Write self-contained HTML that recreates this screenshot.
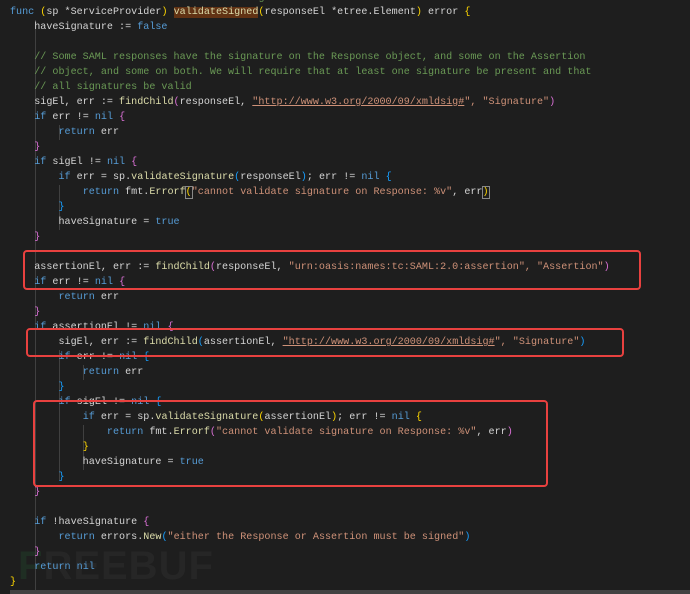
<!DOCTYPE html>
<html><head><meta charset="utf-8"><style>
body{margin:0;width:690px;height:594px;background:#1e1e1e;overflow:hidden;position:relative;font-family:"Liberation Mono",monospace;font-size:10.1px;color:#d4d4d4}
.l{position:absolute;left:10px;white-space:pre;height:15px;line-height:15px;top:0}
.k{color:#569cd6}.f{color:#dcdcaa}.s{color:#ce9178}.c{color:#6a9955}.v{color:#d4d4d4}
.y{color:#ffd700}.p{color:#da70d6}.b{color:#179fff}.u{text-decoration:underline}
.hl{background:#613214}
.box{position:absolute;border:2.5px solid #e8413f;border-radius:4px}
.g{position:absolute;width:1px;background:#404040}
.wm{position:absolute;left:18px;top:544px;font-family:"Liberation Sans",sans-serif;font-weight:bold;font-size:40px;line-height:44px;color:#262626;letter-spacing:1px}
</style></head><body>
<div class="wm"><span style="color:#1f2e23">F</span>REEBUF</div>
<div class="g" style="left:35px;top:20px;height:570px"></div>
<div class="g" style="left:59px;top:125px;height:15px"></div>
<div class="g" style="left:59px;top:185px;height:45px"></div>
<div class="g" style="left:59px;top:350px;height:130px"></div>
<div class="g" style="left:83px;top:365px;height:15px"></div>
<div class="g" style="left:83px;top:425px;height:45px"></div>
<div class="l c" style="top:-9px">// are valid and there is at least one signature.</div>
<div class="l" style="top:5px"><span class="k">func</span> <span class="y">(</span>sp *ServiceProvider<span class="y">)</span> <span class="f hl">validateSigned</span><span class="y">(</span>responseEl *etree.Element<span class="y">)</span> error <span class="y">{</span></div>
<div class="l" style="top:20px">    haveSignature := <span class="k">false</span></div>
<div class="l c" style="top:50px">    // Some SAML responses have the signature on the Response object, and some on the Assertion</div>
<div class="l c" style="top:65px">    // object, and some on both. We will require that at least one signature be present and that</div>
<div class="l c" style="top:80px">    // all signatures be valid</div>
<div class="l" style="top:95px">    sigEl, err := <span class="f">findChild</span><span class="p">(</span>responseEl, <span class="s"><span class="u">"http://www.w3.org/2000/09/xmldsig#</span>", "Signature"</span><span class="p">)</span></div>
<div class="l" style="top:110px">    <span class="k">if</span> err != <span class="k">nil</span> <span class="p">{</span></div>
<div class="l" style="top:125px">        <span class="k">return</span> err</div>
<div class="l" style="top:140px">    <span class="p">}</span></div>
<div class="l" style="top:155px">    <span class="k">if</span> sigEl != <span class="k">nil</span> <span class="p">{</span></div>
<div class="l" style="top:170px">        <span class="k">if</span> err = sp.<span class="f">validateSignature</span><span class="b">(</span>responseEl<span class="b">)</span>; err != <span class="k">nil</span> <span class="b">{</span></div>
<div class="l" style="top:185px">            <span class="k">return</span> fmt.<span class="f">Errorf</span><span class="y" style="outline:1px solid #888">(</span><span class="s">"cannot validate signature on Response: %v"</span>, err<span class="y" style="outline:1px solid #888">)</span></div>
<div class="l" style="top:200px">        <span class="b">}</span></div>
<div class="l" style="top:215px">        haveSignature = <span class="k">true</span></div>
<div class="l" style="top:230px">    <span class="p">}</span></div>
<div class="l" style="top:260px">    assertionEl, err := <span class="f">findChild</span><span class="p">(</span>responseEl, <span class="s">"urn:oasis:names:tc:SAML:2.0:assertion", "Assertion"</span><span class="p">)</span></div>
<div class="l" style="top:275px">    <span class="k">if</span> err != <span class="k">nil</span> <span class="p">{</span></div>
<div class="l" style="top:290px">        <span class="k">return</span> err</div>
<div class="l" style="top:305px">    <span class="p">}</span></div>
<div class="l" style="top:320px">    <span class="k">if</span> assertionEl != <span class="k">nil</span> <span class="p">{</span></div>
<div class="l" style="top:335px">        sigEl, err := <span class="f">findChild</span><span class="b">(</span>assertionEl, <span class="s"><span class="u">"http://www.w3.org/2000/09/xmldsig#</span>", "Signature"</span><span class="b">)</span></div>
<div class="l" style="top:350px">        <span class="k">if</span> err != <span class="k">nil</span> <span class="b">{</span></div>
<div class="l" style="top:365px">            <span class="k">return</span> err</div>
<div class="l" style="top:380px">        <span class="b">}</span></div>
<div class="l" style="top:395px">        <span class="k">if</span> sigEl != <span class="k">nil</span> <span class="b">{</span></div>
<div class="l" style="top:410px">            <span class="k">if</span> err = sp.<span class="f">validateSignature</span><span class="y">(</span>assertionEl<span class="y">)</span>; err != <span class="k">nil</span> <span class="y">{</span></div>
<div class="l" style="top:425px">                <span class="k">return</span> fmt.<span class="f">Errorf</span><span class="p">(</span><span class="s">"cannot validate signature on Response: %v"</span>, err<span class="p">)</span></div>
<div class="l" style="top:440px">            <span class="y">}</span></div>
<div class="l" style="top:455px">            haveSignature = <span class="k">true</span></div>
<div class="l" style="top:470px">        <span class="b">}</span></div>
<div class="l" style="top:485px">    <span class="p">}</span></div>
<div class="l" style="top:515px">    <span class="k">if</span> !haveSignature <span class="p">{</span></div>
<div class="l" style="top:530px">        <span class="k">return</span> errors.<span class="f">New</span><span class="b">(</span><span class="s">"either the Response or Assertion must be signed"</span><span class="b">)</span></div>
<div class="l" style="top:545px">    <span class="p">}</span></div>
<div class="l" style="top:560px">    <span class="k">return</span> <span class="k">nil</span></div>
<div class="l y" style="top:575px">}</div>
<div class="box" style="left:23px;top:250px;width:614px;height:36px"></div>
<div class="box" style="left:26px;top:328px;width:594px;height:25px"></div>
<div class="box" style="left:33px;top:400px;width:511px;height:83px"></div>
<div style="position:absolute;left:10px;top:590px;width:680px;height:4px;background:#424242"></div>
</body></html>
